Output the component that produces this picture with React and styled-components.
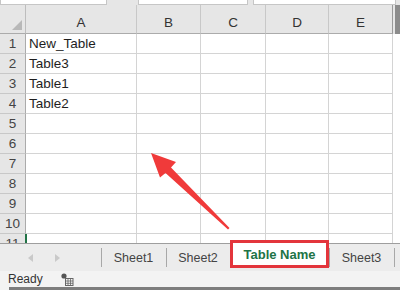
import React from 'react';
import styled, { createGlobalStyle } from 'styled-components';

const Global = createGlobalStyle`
  html, body { margin: 0; padding: 0; background: #ffffff; }
  body { font-family: "Liberation Sans", Arial, sans-serif; }
`;

const Page = styled.div`
  position: relative;
  width: 400px;
  height: 290px;
  overflow: hidden;
  display: flex;
  flex-direction: column;
  background: #fff;
`;

const TopStrip = styled.div`
  height: 5px;
  display: flex;
  background: #e6e6e6;
`;

const TopBox = styled.div`
  width: ${p => p.w}px;
  margin-left: ${p => p.gap || 0}px;
  background: #fff;
  border: 1px solid #c6c6c6;
  border-top: none;
  box-sizing: border-box;
`;

const Sheet = styled.div`
  height: 238px;
  overflow: hidden;
  display: grid;
  grid-template-columns: 26px 111px 64px 65px 63px 64px 7px;
  grid-template-rows: 29px repeat(11, 20px);
`;

const Corner = styled.div`
  position: relative;
  background: #e6e6e6;
  border-right: 1px solid #bdbdbd;
  border-bottom: 1px solid #ababab;
  box-sizing: border-box;
  &::after {
    content: '';
    position: absolute;
    right: 3px;
    bottom: 3px;
    border-left: 10px solid transparent;
    border-bottom: 10px solid #b8b8b8;
  }
`;

const ColHead = styled.div`
  background: #e6e6e6;
  border-right: 1px solid ${p => (p.edge ? '#9a9a9a' : '#c8c8c8')};
  border-bottom: 1px solid #ababab;
  box-sizing: border-box;
  display: flex;
  align-items: center;
  justify-content: center;
  padding-top: 6px;
  font-size: 13.5px;
  color: #333;
`;

const RowHead = styled.div`
  background: #e6e6e6;
  border-right: 1px solid #ababab;
  border-bottom: 1px solid #c8c8c8;
  box-sizing: border-box;
  display: flex;
  align-items: center;
  justify-content: center;
  font-size: 13.5px;
  color: #444;
`;

const Cell = styled.div`
  border-right: 1px solid #d4d4d4;
  border-bottom: 1px solid #d4d4d4;
  border-left: ${p => (p.mark ? '2px solid #217346' : 'none')};
  margin-left: ${p => (p.mark ? '-1px' : '0')};
  box-sizing: border-box;
  display: flex;
  align-items: center;
  padding-left: 3px;
  font-size: 13.5px;
  color: #1e1e1e;
  white-space: nowrap;
`;

const Edge = styled.div`
  background: ${p => (p.head ? '#8c8c8c' : '#ffffff')};
  border-left: ${p => (p.head ? '2px solid #e6e6e6' : 'none')};
`;

const TabBar = styled.div`
  height: 28px;
  display: flex;
  align-items: stretch;
  background: #ececec;
  border-top: 1px solid #9e9e9e;
  box-sizing: border-box;
`;

const NavArea = styled.div`
  width: 101px;
  display: flex;
  align-items: center;
  padding-left: 28px;
  gap: 22px;
  box-sizing: border-box;
`;

const NavArrow = styled.span`
  width: 0;
  height: 0;
  border-top: 4px solid transparent;
  border-bottom: 4px solid transparent;
  ${p => (p.left ? 'border-right: 5px solid #c9c9c9;' : 'border-left: 5px solid #c9c9c9;')}
`;

const Tab = styled.div`
  position: relative;
  width: ${p => p.w}px;
  display: flex;
  align-items: center;
  justify-content: center;
  font-size: 12.5px;
  color: #444;
  &::before {
    content: '';
    position: absolute;
    left: 0;
    top: 4px;
    bottom: 4px;
    width: 1px;
    background: #a8a8a8;
  }
`;

const ActiveTab = styled.div`
  width: 99px;
  height: 28px;
  margin-top: -4px;
  background: #fff;
  border: 3px solid #e3353c;
  box-sizing: border-box;
  display: flex;
  align-items: center;
  justify-content: center;
  font-size: 13px;
  font-weight: bold;
  color: #217346;
  z-index: 1;
`;

const StatusBar = styled.div`
  position: relative;
  flex: 1;
  display: flex;
  align-items: center;
  gap: 18px;
  padding-left: 8px;
  padding-bottom: 3px;
  background: #f3f3f3;
  font-size: 12px;
  color: #333;
  &::after {
    content: '';
    position: absolute;
    left: 9px;
    right: 0;
    bottom: 0;
    height: 3px;
    background: #7d7d7d;
  }
`;

const Overlay = styled.svg`
  position: absolute;
  left: 0;
  top: 0;
  pointer-events: none;
`;

const cols = ['A', 'B', 'C', 'D', 'E'];
const values = ['New_Table', 'Table3', 'Table1', 'Table2'];

export default function App() {
  const rows = Array.from({ length: 11 }, (_, i) => i + 1);
  return (
    <>
      <Global />
      <Page>
        <TopStrip>
          <TopBox w={107} />
          <TopBox w={110} gap={31} />
          <TopBox w={143} gap={5} />
        </TopStrip>
        <Sheet>
          <Corner />
          {cols.map(c => (
            <ColHead key={c} edge={c === 'E'}>{c}</ColHead>
          ))}
          <Edge head />
          {rows.map(r => (
            <React.Fragment key={r}>
              <RowHead>{r}</RowHead>
              {cols.map((c, i) => (
                <Cell key={c} mark={r === 11 && i === 0}>
                  {i === 0 ? values[r - 1] : ''}
                </Cell>
              ))}
              <Edge />
            </React.Fragment>
          ))}
        </Sheet>
        <TabBar>
          <NavArea>
            <NavArrow left />
            <NavArrow />
          </NavArea>
          <Tab w={65}>Sheet1</Tab>
          <Tab w={64}>Sheet2</Tab>
          <ActiveTab>Table Name</ActiveTab>
          <Tab w={65}>Sheet3</Tab>
          <Tab w={6} />
        </TabBar>
        <StatusBar>
          <span>Ready</span>
          <svg width="13" height="13" viewBox="0 0 13 13">
            <circle cx="3" cy="3" r="2.6" fill="#555" />
            <rect x="4.5" y="5.5" width="7.5" height="7" fill="none" stroke="#666" strokeWidth="1" />
            <path d="M4.5 8h7.5M4.5 10.3h7.5M7 5.5v7M9.5 5.5v7" stroke="#666" strokeWidth="0.8" />
          </svg>
        </StatusBar>
        <Overlay width="400" height="290" viewBox="0 0 400 290">
          <polygon
            points="151,153 176,162 171,167.5 229.5,228 228,229.5 165.5,173 160,177.5"
            fill="#f03a3a"
          />
        </Overlay>
      </Page>
    </>
  );
}
